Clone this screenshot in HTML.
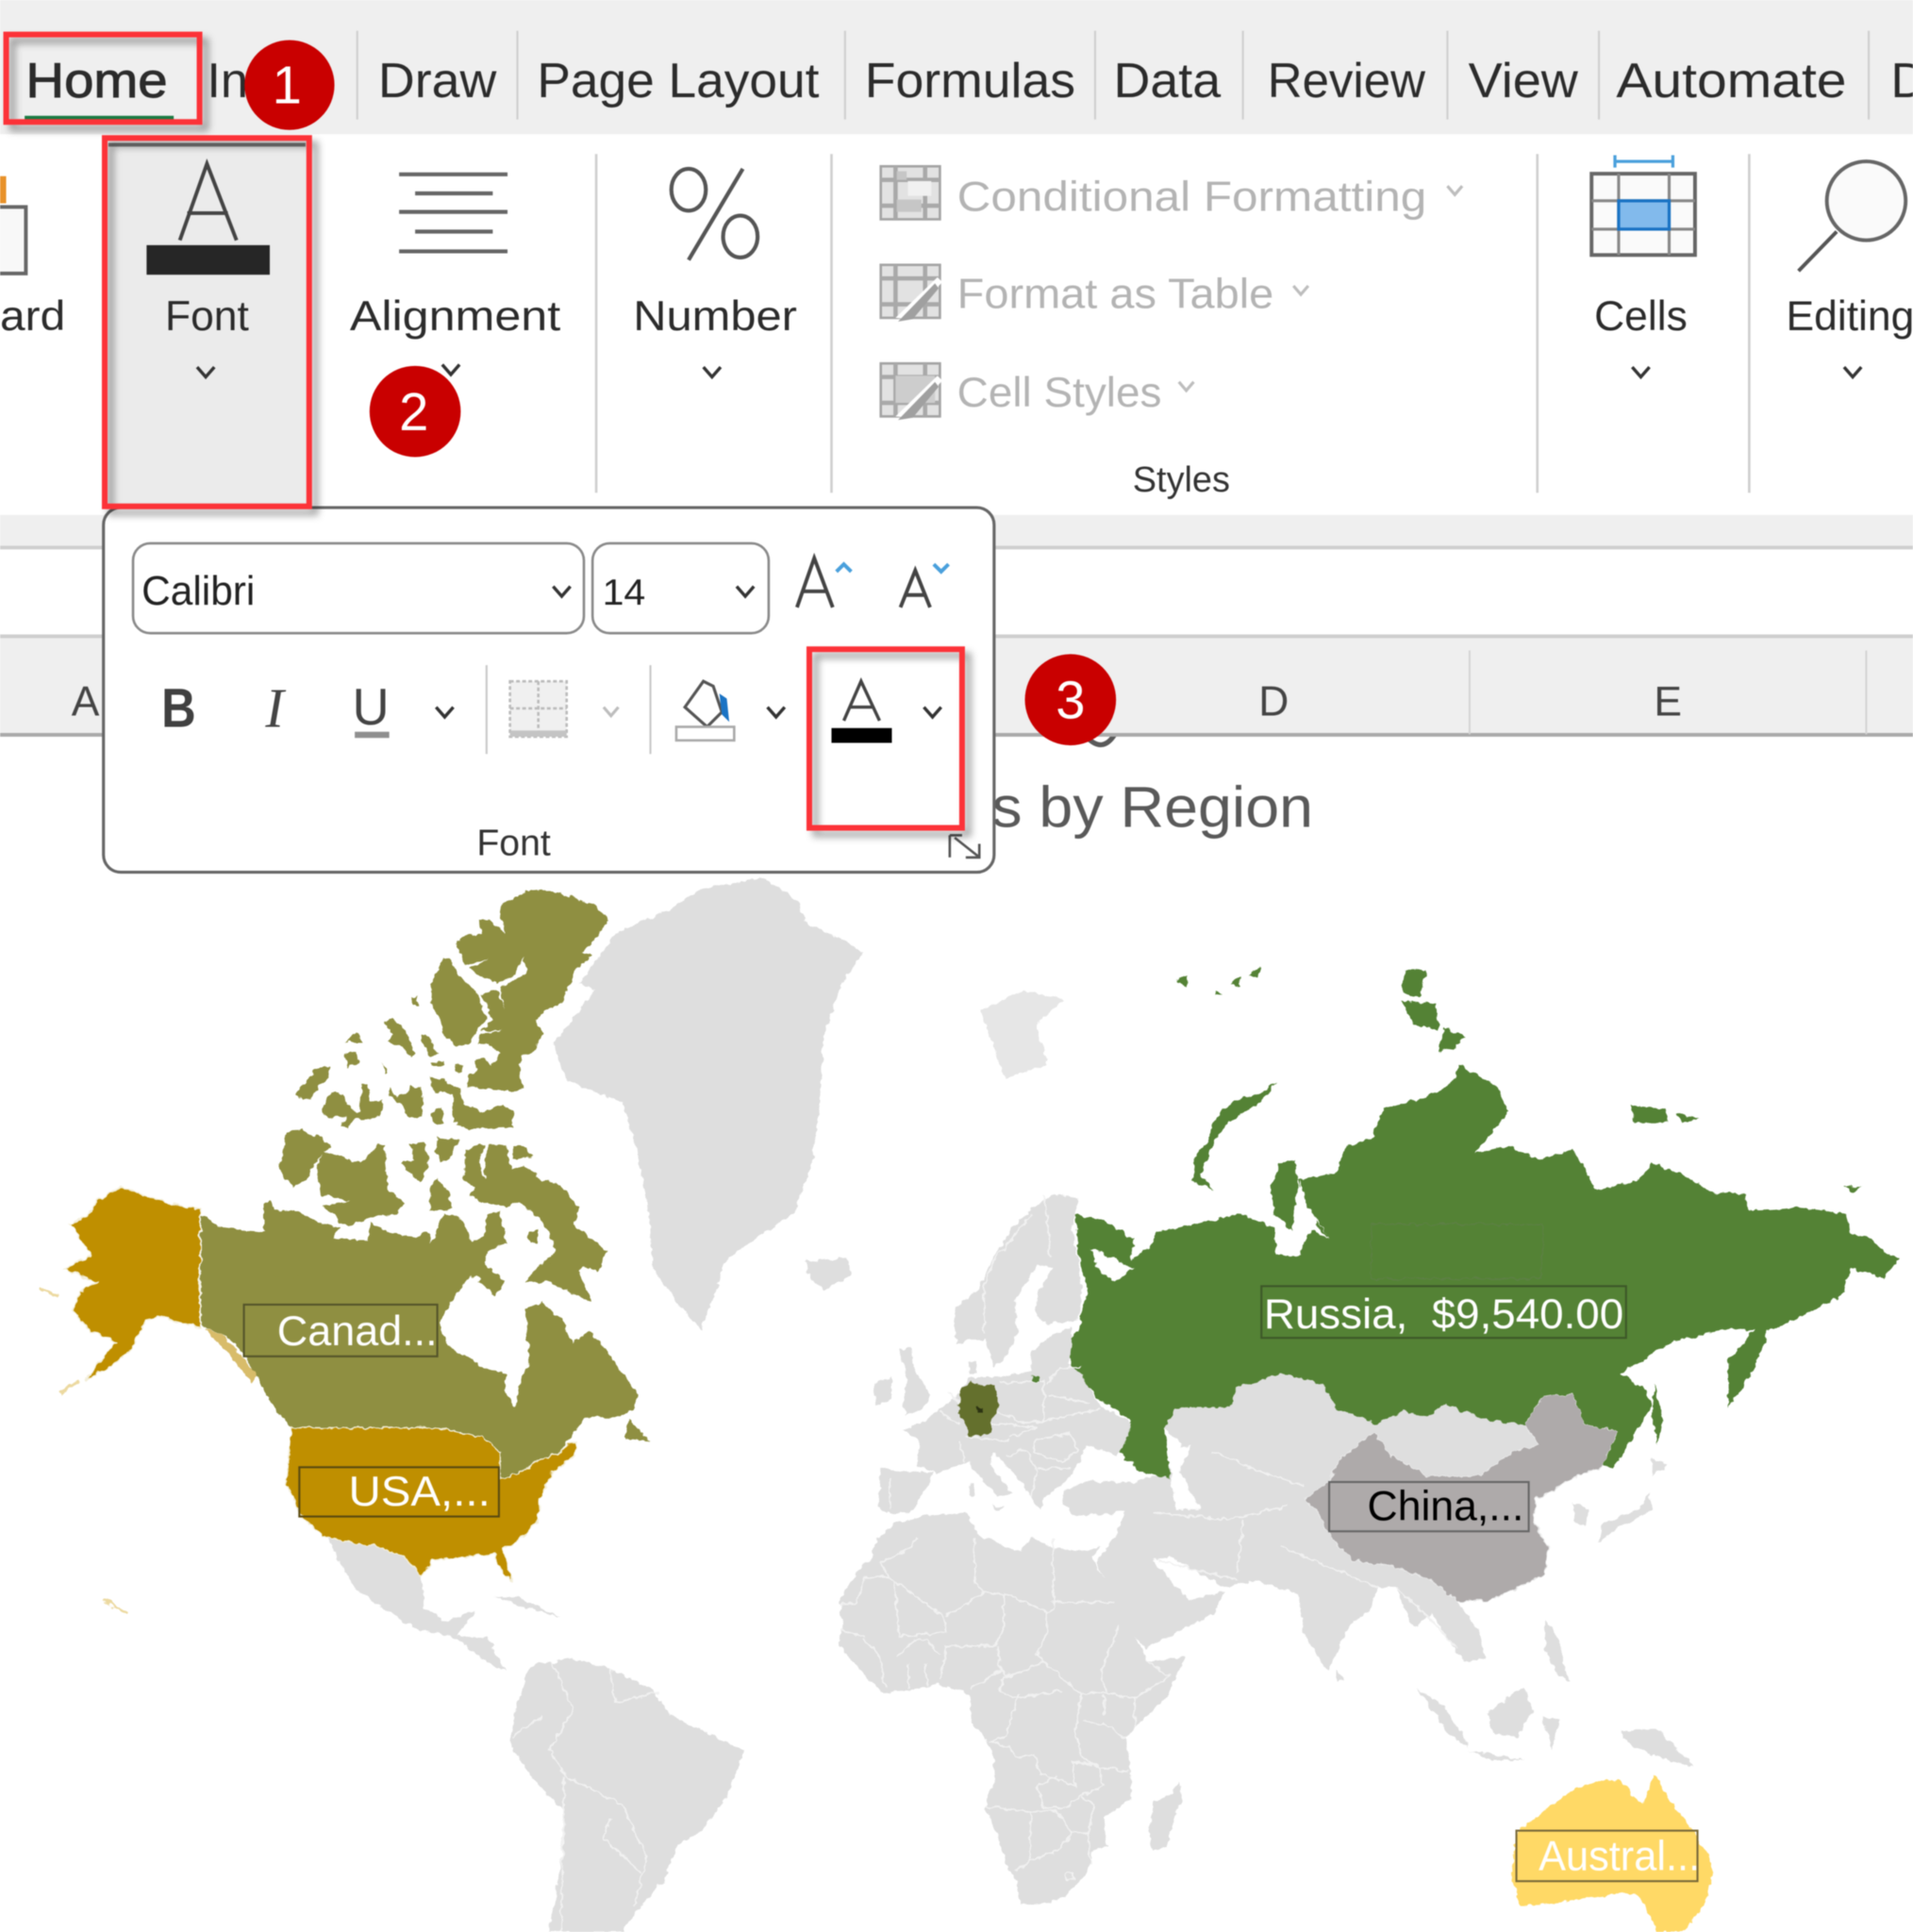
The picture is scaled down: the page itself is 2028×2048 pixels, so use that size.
<!DOCTYPE html>
<html><head><meta charset="utf-8"><style>
html,body{margin:0;padding:0;background:#fff;width:2028px;height:2048px;overflow:hidden}
svg{display:block;filter:blur(.6px)}
text{font-family:"Liberation Sans",sans-serif}
.t{fill:#2b2b2b;font-size:34px}
.d{fill:#b4b4b4;font-size:34px}
.n{stroke:#f1f1f1;stroke-width:1.8;fill:none;vector-effect:non-scaling-stroke}
.s{stroke:#f3eed8;stroke-width:2;vector-effect:non-scaling-stroke}
.lb{font-size:34px}
</style></head><body>
<svg xmlns="http://www.w3.org/2000/svg" width="2028" height="2048" viewBox="0 0 2028 2048">
<defs>
<path id="c" d="M-7 -4L0 4L7 -4" fill="none" stroke="#333" stroke-width="2.6"/>
<path id="cg" d="M-6 -4L0 3L6 -4" fill="none" stroke="#bdbdbd" stroke-width="2.4"/>
<filter id="sh" x="-20%" y="-20%" width="150%" height="150%"><feDropShadow dx="5" dy="5" stdDeviation="3" flood-color="#000" flood-opacity=".38"/></filter>
<filter id="rough" filterUnits="userSpaceOnUse" x="0" y="900" width="2028" height="1148" color-interpolation-filters="sRGB"><feTurbulence type="fractalNoise" baseFrequency=".13" numOctaves="2" seed="4" result="n"/><feDisplacementMap in="SourceGraphic" in2="n" scale="7" xChannelSelector="R" yChannelSelector="G"/></filter>
<g id="gr"><rect width="48" height="43" fill="#e2e2e2" stroke="#a4a4a4" stroke-width="2"/><path d="M0 11H48M0 32H48M12 0V43M36 0V43" stroke="#a9a9a9" stroke-width="3.500"/></g>
<g id="br"><path d="M12 43L46 10L50 14L22 44Z" fill="#fff"/><path d="M14 46L44 15L47 19L26 44Z" fill="#a0a0a0"/></g>
</defs>
<rect width="2028" height="2048" fill="#fff"/>

<g filter="url(#rough)">
<!-- MAP west -->
<g transform="translate(0,920) scale(.6467,.7194)">
<g fill="#dedede">
<path d="M1010 95L1100 60L1150 30L1250 15L1310 50L1320 80L1390 110L1415 125L1380 170L1350 250L1345 340L1330 440L1300 510L1240 545L1190 580L1150 680L1110 640L1070 590L1065 520L1045 420L1020 345L930 315L905 260L950 210L975 180L950 170L1000 110Z"/>
<path d="M1320 580L1390 575L1395 600L1350 622L1325 600Z"/>
<path d="M535 985L620 1000L670 1020L690 1045L695 1090L730 1110L780 1095L750 1130L800 1135L830 1185L790 1165L740 1130L690 1125L625 1090L580 1060Z"/>
<path d="M810 1075L850 1075L920 1105L860 1090Z"/>
<path d="M870 1175L940 1165L1000 1180L1070 1210L1100 1250L1220 1300L1190 1370L1150 1420L1110 1440L1090 1490L1050 1530L1020 1568L900 1568L925 1440L925 1390L870 1340L835 1290L845 1240Z"/>
</g>
<path class="n" d="M905 1170L940 1240L900 1300L930 1340L1020 1380L1060 1460L1040 1530M1000 1180L1010 1230L1080 1215M840 1280L890 1250M925 1340L920 1568M1000 1400L990 1430L1050 1480"/>
<g fill="#8f8f41">
<path d="M330 510L360 530L780 565L790 570L780 590L750 625L720 670L730 700L790 735L830 745L825 770L845 795L855 750L868 730L865 690L860 650L890 640L920 665L940 700L965 680L985 700L1020 745L1045 775L1040 795L1015 810L960 810L925 850L920 860L880 875L845 895L820 900L820 862L790 838L715 825L478 825L445 790L420 750L400 715L370 690L330 675Z"/>
<path d="M990 570L965 590L945 585L970 640L900 610L860 610L880 590L905 570L950 560Z"/>
<path d="M790 580L830 610L810 630L785 610Z"/>
<path d="M1030 810L1065 845L1025 840Z"/>
</g>
<g fill="#bf8f00" class="s">
<path d="M200 470L260 490L328 505V678L290 670L265 660L240 665L215 710L180 735L140 755L190 700L145 680L120 655L130 625L160 610L105 590L150 570L115 525L145 510L160 490Z"/>
<path d="M478 825L715 825L790 838L820 862L820 900L845 895L880 875L920 860L930 850L945 845L945 865L905 890L885 930L880 965L850 990L825 1005L838 1050L825 1040L810 1010L760 1015L710 1020L690 1045L670 1020L620 1000L580 995L530 985L490 950L470 905Z"/>
</g>
<path d="M335 678L365 688L420 745L415 760L370 712Z" fill="#d8bc6a"/>
<path d="M65 620L95 630M100 775L130 755M170 1078L210 1100" stroke="#ecd9a0" stroke-width="4"/>
</g>

<!-- Arctic Canada -->
<g transform="translate(280,930) scale(.3333)" fill="#8f8f41">
<path d="M835 45L910 40L1000 70L1060 90L1095 140L1060 190L1010 240L1040 245L990 300L960 365L945 400L900 420L860 450L885 500L850 560L820 570L810 630L825 670L790 680L710 675L645 665L650 630L680 610L670 580L700 575L725 600L750 560L715 530L680 530L685 500L760 485L690 490L725 450L690 370L745 360L765 415L750 350L810 320L835 295L825 255L800 310L740 340L720 325L690 315L650 290L690 275L710 260L640 280L610 210L640 185L690 180L685 135L710 135L770 175L750 130L755 85Z"/>
<path d="M570 255L590 260L625 320L680 370L710 450L680 480L650 530L610 540L570 500L560 450L530 410L530 340L550 290Z"/>
<path d="M465 380L485 375L490 410L475 410Z"/>
<path d="M380 460L410 450L450 490L480 560L470 570L430 535L390 520L410 500Z"/>
<path d="M500 500L525 505L550 565L530 570L510 540Z"/>
<path d="M255 530L295 495L315 525L270 525Z"/><path d="M255 560L295 555L300 590L265 605Z"/>
<path d="M525 590L575 580L575 600L530 600Z"/><path d="M610 595L635 595L630 620L615 620Z"/><path d="M375 590L395 620L385 625Z"/>
<path d="M100 690L160 615L205 600L205 640L170 670L150 700L120 710Z"/>
<path d="M185 745L210 680L235 680L280 740L305 745L310 655L330 660L335 710L375 710L370 760L290 770L265 800L240 795L265 760L205 765Z"/>
<path d="M400 665L415 695L455 690L465 665L500 670L505 760L465 765L430 720L395 690Z"/>
<path d="M525 635L570 645L620 670L640 730L700 745L760 720L795 745L790 795L650 800L600 780L600 690L540 685Z"/>
<path d="M530 745L565 735L575 785L535 780Z"/>
<path d="M70 810L120 805L185 825L210 860L160 910L140 950L95 985L50 935Z"/>
<path d="M190 875L235 885L260 895L305 910L335 880L360 850L385 850L385 900L395 990L445 1040L415 1075L350 1075L270 1110L240 1095L190 1045L270 1030L180 1010L165 920Z"/>
<path d="M460 845L510 840L525 920L495 970L430 905L480 900Z"/>
<path d="M550 830L620 835L590 895L560 905L545 880Z"/>
<path d="M530 1060L530 980L550 955L585 1000L600 1055L545 1060Z"/>
<path d="M640 870L690 845L705 850L685 880L690 940L715 975L700 985L650 1010L670 990L635 960Z"/>
<path d="M720 850L770 850L785 930L830 915L880 960L945 980L1000 1050L985 1105L1090 1190L1060 1260L1020 1210L1000 1260L900 1260L925 1180L905 1130L870 1080L810 1030L770 1050L690 1030L650 1010L705 960L700 900Z"/>
<path d="M790 855L830 855L850 890L790 895Z"/>
<path d="M840 1125L870 1120L870 1160L845 1165Z"/>
<path d="M0 1040L15 1030L30 1060L100 1060L180 1100L240 1115L220 1145L330 1155L340 1100L395 1130L480 1145L520 1125L535 1165L570 1065L630 1085L660 1160L700 1140L710 1070L750 1060L770 1165L710 1190L690 1270H0Z"/>
</g>

<!-- MAP east -->
<g transform="translate(1014,920) scale(.6467,.7194)">
<path fill="#dedede" d="M340 895L370 850L340 825L360 795L450 795L460 765L530 745L600 760L620 795L690 820L730 800L770 810L800 790L880 815L930 820L960 780L1010 775L1030 820L1085 830L1060 880L1000 905L950 930L940 960L970 1000L965 1040L925 1060L870 1080L820 1080L860 1130L865 1165L830 1170L780 1100L750 1120L720 1060L690 1060L680 1090L640 1120L610 1185L570 1130L560 1070L490 1050L440 1060L400 1040L350 1015L320 1020L380 1080L440 1065L420 1100L310 1150L270 1110L230 1020L260 985L300 900Z"/>
<path fill="#fff" d="M345 860L385 850L365 890L400 945L360 945Z"/>
<path class="n" d="M420 860L500 890L570 910M320 950L450 960L540 940M470 960L460 1040M530 1000L690 1060M330 1020L460 1050M720 1060L780 1110L820 1150"/>
<g fill="#dedede">
<path d="M1135 920L1140 945L1090 970L1050 995L1060 965L1120 945Z"/><path d="M1140 870L1165 880L1140 895Z"/><path d="M1010 935L1035 945L1030 970L1015 965Z"/>
<path d="M965 1110L985 1130L1005 1200L985 1190L965 1150Z"/>
<path d="M755 1210L800 1235L840 1295L810 1280Z"/><path d="M870 1245L930 1205L945 1240L920 1280L880 1275Z"/>
<path d="M840 1300L930 1315L880 1315Z"/><path d="M1090 1270L1150 1270L1210 1325L1150 1310L1100 1290Z"/>
<path d="M622 1180L635 1195L625 1200Z"/><path d="M960 1250L990 1255L975 1300Z"/>
</g>
<path fill="#e6e6e6" d="M40 210L110 180L175 195L130 230L150 290L80 310L60 260Z"/>
<path fill="#aeaaaa" stroke="#e8e8e8" stroke-width="1.500" d="M685 830L710 865L770 895L860 895L910 860L955 850L930 820L960 780L1010 775L1030 820L1085 830L1060 880L1000 905L950 930L945 965L970 1000L965 1040L925 1060L870 1080L820 1080L780 1050L720 1030L650 1020L615 990L590 945L570 930L610 905L630 870Z"/>
<g fill="#548235">
<path d="M195 510L240 520L290 545L285 580L320 555L330 535L395 525L460 510L520 530L525 570L560 570L590 520L610 545L570 490L560 460L620 450L640 410L680 400L700 355L760 340L810 320L825 290L885 320L905 360L850 420L905 410L960 430L1010 415L1050 475L1120 460L1140 435L1200 455L1240 480L1290 480L1300 505L1380 500L1460 510L1465 540L1500 545L1520 565L1545 575L1520 605L1465 590L1455 625L1440 635L1340 680L1255 680L1170 700L1090 745L1130 770L1140 790L1110 840L1075 885L1060 880L1085 830L1030 820L1010 775L960 780L930 820L880 815L800 790L770 810L730 800L690 820L620 795L600 760L530 745L460 765L450 795L360 795L340 825L350 900L300 890L265 860L285 815L230 780L190 740L180 700L200 680L215 620L200 570Z"/>
<path d="M525 315L500 345L445 375L420 410L400 450L420 475L385 460L395 420L410 405L420 375L450 345L500 330Z"/>
<path d="M530 435L555 430L560 470L550 535L520 510L515 470Z"/>
<path d="M1335 645L1290 700L1265 725L1265 795L1300 750L1325 700Z"/>
<path d="M1145 760L1158 815L1150 850L1140 810Z"/>
<path d="M735 150L770 150L760 190L730 185Z"/><path d="M730 195L785 200L790 240L750 230Z"/><path d="M800 235L835 250L815 265L790 270Z"/>
<path d="M1105 350L1165 355L1165 375L1110 375Z"/><path d="M1180 362L1220 370L1190 375Z"/><path d="M1455 470L1485 470L1470 478Z"/>
<path d="M490 150L500 145L495 160L480 160Z"/><path d="M455 165L465 160L465 175L450 172Z"/><path d="M360 165L380 160L375 175Z"/><path d="M425 180L435 185L425 190Z"/>
</g>
<g fill="#fff">
<path d="M220 560L290 590L260 610L230 590Z"/>
<path d="M530 570L550 545L565 460L575 515L610 548L575 530L560 575Z"/>
</g>
<path fill="#ffd966" d="M920 1420L970 1385L1010 1360L1050 1345L1090 1345L1105 1365L1125 1380L1145 1335L1165 1370L1200 1410L1230 1450L1240 1480L1225 1530L1190 1568H1150L1120 1515L1095 1510L1050 1515L980 1525L925 1530L908 1480Z"/>
<rect x="680" y="525" width="280" height="80" fill="none" stroke="#5f7f48" stroke-width="2" opacity=".8"/>
</g>

<!-- Europe -->
<g transform="translate(880,1260) scale(.3333)">
<g fill="#dedede">
<path d="M400 380L470 320L520 220L600 100L700 20L790 30L770 130L790 230L800 340L790 420L690 430L655 400L660 330L700 270L710 250L660 240L590 350L590 420L600 455L560 530L520 570L495 480L440 480L405 495L395 420Z"/>
<path d="M640 520L700 470L770 440L760 560L800 590L830 650L870 700L960 745L950 790L910 850L860 830L810 820L790 880L750 930L680 985L670 1020L650 1000L620 950L570 890L520 840L510 880L580 970L540 980L480 920L440 870L380 890L340 905L280 880L285 800L230 770L300 740L350 700L415 650L440 600L530 600L640 580Z"/>
<path d="M440 550L465 550L470 590L445 590Z"/>
<path d="M220 510L260 510L265 570L320 660L300 700L240 720L230 680L245 600Z"/>
<path d="M140 620L195 600L195 670L145 690Z"/>
<path d="M160 890L330 905L290 980L260 1030L190 1035L155 1015Z"/>
<path d="M740 960L830 930L1010 940L1030 1000L890 1035L780 1040L745 1005Z"/>
<path d="M510 1010L550 1010L540 1025Z"/><path d="M440 940L460 940L460 980L445 980Z"/>
</g>
<path class="n" d="M680 20L690 100L700 220M640 80L520 230L490 310L490 460M540 620L680 610L680 740L620 745L530 710M690 660L820 680M690 620L730 570L800 570M680 740L860 700M510 745L660 760L570 790M650 800L760 780L790 830L740 870L650 840ZM430 790L570 800M410 800L430 870M560 850L620 830L660 900L640 980M660 890L760 890M380 650L420 690M350 710L410 750M190 925L190 1020"/>
<path d="M420 640L450 610L470 625L525 625L540 690L510 740L510 780L440 790L435 750L405 715Z" fill="#64702d"/>
<rect x="470" y="697" width="14" height="14" fill="#2c3312"/>
<rect x="640" y="598" width="25" height="14" fill="#548235"/>
</g>

<!-- Africa -->
<g transform="translate(880,1630) scale(.3333)">
<path fill="#dedede" d="M150 0L210 -50L300 -70L430 -80L470 -10L560 30L610 40L640 0L710 35L800 40L860 30L835 60L910 200L990 350L1010 395L1130 380L1070 510L980 590L940 640L955 740L960 830L870 890L880 980L835 995L835 1020L810 1075L750 1140L690 1160L605 1165L590 1090L560 1040L540 970L495 865L500 830L525 770L520 700L490 630L450 590L445 510L430 490L395 480L340 465L260 485L170 490L130 460L90 410L50 370L25 330L40 290L30 200L90 100L130 70Z"/>
<path fill="#dedede" d="M1110 775L1120 830L1090 900L1070 985L1025 995L1015 940L1030 840L1085 820Z"/>
<path class="n" d="M160 80L240 40L280 0M160 80L190 125L360 250L370 300L220 315L205 140M190 125L110 125L85 210L30 210M110 315L35 295M105 320L160 380L175 480M370 250L490 175L550 180L555 290L520 345L370 345L350 450M490 175L460 140L460 0M550 175L690 235L710 230V0M710 205H900M690 235V300L660 370L680 395L800 500L860 490L900 500L970 510L1080 440L1005 390M680 395L600 430L550 450L540 490L600 510L740 485M530 345L545 420L450 480M545 420L560 440L600 430M920 280L860 430L880 490M600 495L560 630L510 650L570 665L590 700L650 690L670 750L780 790L770 715L850 720L870 790L800 820L750 860L680 860L660 790L720 760M800 500L780 610L800 700L860 730L950 745M800 585L870 590L940 640M870 500L870 570M970 510L970 600M495 855L640 870L635 1030L590 1060M640 870L720 870L770 940L820 940L840 850L800 825M770 940L720 1000L635 1025M820 940L830 1040M210 380L270 325L310 325L350 370M250 400L250 480M300 400L310 470"/>
<circle cx="762" cy="1077" r="14" class="n"/>
</g>
</g>

<!-- UI + labels in overview coords -->
<g transform="scale(1.3059)">
<g fill="none" stroke-width="1.6">
<rect x="1024" y="1044" width="296" height="42" stroke="#3d5828"/>
<rect x="198" y="1059" width="157" height="42" stroke="#55552a"/>
<rect x="243" y="1191" width="162" height="40" stroke="#5a4a10"/>
<rect x="1079" y="1203" width="162" height="40" stroke="#666"/>
<rect x="1231" y="1486" width="147" height="41" stroke="#7a6a3a"/>
</g>
<g class="lb" fill="#fff">
<text x="1026" y="1078" textLength="292" lengthAdjust="spacingAndGlyphs" xml:space="preserve">Russia,  $9,540.00</text>
<text x="225" y="1092" textLength="130" lengthAdjust="spacingAndGlyphs">Canad...</text>
<text x="283" y="1222" textLength="115" lengthAdjust="spacingAndGlyphs">USA,...</text>
<text x="1110" y="1234" textLength="127" lengthAdjust="spacingAndGlyphs" fill="#000">China,...</text>
<text x="1249" y="1518" textLength="131" lengthAdjust="spacingAndGlyphs">Austral...</text>
</g>

<!-- chart title -->
<text x="805" y="671" textLength="261" lengthAdjust="spacingAndGlyphs" font-size="47" fill="#595959">s by Region</text>
<path d="M882 598Q895 612 905 596" fill="none" stroke="#595959" stroke-width="4"/>

<!-- top bands -->
<rect width="1553" height="109" fill="#efefef"/>
<rect y="109" width="1553" height="309" fill="#fff"/>
<rect y="418" width="1553" height="26" fill="#efefef"/>
<rect y="443" width="1553" height="3" fill="#cfcfcf"/>
<rect y="446" width="1553" height="70" fill="#fff"/>
<rect y="515" width="1553" height="82" fill="#efefef"/>
<rect y="515" width="1553" height="3" fill="#cfcfcf"/>
<rect y="595" width="1553" height="3" fill="#aaa"/>
<path d="M1193 528V596M1515 528V596" stroke="#d4d4d4" stroke-width="1.500"/>
<g font-size="34" fill="#444"><text x="1034" y="581" text-anchor="middle">D</text><text x="1354" y="581" text-anchor="middle">E</text><text x="58" y="581">A</text></g>

<!-- tab separators -->
<path d="M290 25V97M420 25V97M686 25V97M889 25V97M1009 25V97M1175 25V97M1298 25V97M1517 25V97" stroke="#cfcfcf" stroke-width="1.600"/>
<g class="t" style="font-size:40px">
<text x="21" y="79" textLength="115" lengthAdjust="spacingAndGlyphs" stroke="#2b2b2b" stroke-width=".7">Home</text>
<text x="168" y="79">In</text>
<text x="307" y="79" textLength="96" lengthAdjust="spacingAndGlyphs">Draw</text>
<text x="436" y="79" textLength="229" lengthAdjust="spacingAndGlyphs">Page Layout</text>
<text x="702" y="79" textLength="171" lengthAdjust="spacingAndGlyphs">Formulas</text>
<text x="904" y="79" textLength="87" lengthAdjust="spacingAndGlyphs">Data</text>
<text x="1029" y="79" textLength="128" lengthAdjust="spacingAndGlyphs">Review</text>
<text x="1192" y="79" textLength="89" lengthAdjust="spacingAndGlyphs">View</text>
<text x="1312" y="79" textLength="187" lengthAdjust="spacingAndGlyphs">Automate</text>
<text x="1535" y="79">D</text>
</g>
<rect x="20" y="94" width="121" height="3" fill="#1a7a43"/>

<!-- ribbon separators -->
<path d="M484 125V400M675 125V400M1248 125V400M1420 125V400" stroke="#cfcfcf" stroke-width="2"/>

<!-- clipboard -->
<rect x="0" y="143" width="5" height="22" fill="#e8922a"/>
<rect x="-6" y="168" width="27" height="54" fill="#f8f8f8" stroke="#666" stroke-width="3"/>
<text class="t" x="0" y="268" textLength="53" lengthAdjust="spacingAndGlyphs">ard</text>

<!-- font button -->
<rect x="86" y="113" width="164" height="296" fill="#ebebeb"/>
<rect x="88" y="116" width="160" height="3" fill="#777"/>
<path d="M146 195L168 133L192 195M152 173H185" fill="none" stroke="#444" stroke-width="3"/>
<rect x="119" y="199" width="100" height="24" fill="#262626"/>
<text class="t" x="168" y="268" text-anchor="middle">Font</text>
<use href="#c" x="167" y="302"/>

<!-- alignment -->
<path d="M324 141.500H412M337 157H400M324 172H412M337 188H400M324 204H412" stroke="#666" stroke-width="3.200"/>
<text class="t" x="284" y="268" textLength="171" lengthAdjust="spacingAndGlyphs">Alignment</text>
<use href="#c" x="366" y="300"/>

<!-- number -->
<g fill="none" stroke="#555" stroke-width="3.200"><ellipse cx="559" cy="154" rx="14" ry="17"/><ellipse cx="601" cy="192" rx="14" ry="17"/><path d="M603 137L559 211"/></g>
<text class="t" x="514" y="268" textLength="133" lengthAdjust="spacingAndGlyphs">Number</text>
<use href="#c" x="578" y="302"/>

<!-- styles -->
<use href="#gr" x="715" y="135"/><rect x="737" y="147" width="19" height="12" fill="#f1f1f1"/><rect x="728" y="139" width="8" height="7" fill="#c6c6c6"/><rect x="728" y="162" width="20" height="10" fill="#c6c6c6"/>
<use href="#gr" x="715" y="215"/><use href="#br" x="715" y="215"/>
<use href="#gr" x="715" y="295"/><rect x="727" y="305" width="32" height="22" fill="#cdcdcd"/><use href="#br" x="715" y="295"/>
<text class="d" x="777" y="171" textLength="381" lengthAdjust="spacingAndGlyphs">Conditional Formatting</text>
<text class="d" x="777" y="250" textLength="257" lengthAdjust="spacingAndGlyphs">Format as Table</text>
<text class="d" x="777" y="330" textLength="166" lengthAdjust="spacingAndGlyphs">Cell Styles</text>
<use href="#cg" x="1181" y="155"/><use href="#cg" x="1056" y="236"/><use href="#cg" x="963" y="314"/>
<text x="959" y="399" text-anchor="middle" font-size="29" fill="#333">Styles</text>

<!-- cells -->
<path d="M1311 131H1358M1311 126V136M1358 126V136" stroke="#4aa0dc" stroke-width="2.500" fill="none"/>
<rect x="1292" y="141" width="84" height="66" fill="#fafafa" stroke="#666" stroke-width="3"/>
<path d="M1314 141V207M1355 141V207M1292 163H1376M1292 186H1376" stroke="#888" stroke-width="2.400"/>
<rect x="1314" y="163" width="41" height="23" fill="#82baec" stroke="#1a73c4" stroke-width="2.500"/>
<text class="t" x="1332" y="268" text-anchor="middle">Cells</text>
<use href="#c" x="1332" y="302"/>

<!-- editing -->
<circle cx="1515" cy="163" r="32" fill="#fafafa" stroke="#666" stroke-width="3"/>
<path d="M1491 188L1460 220" stroke="#555" stroke-width="3"/>
<text class="t" x="1450" y="268">Editing</text>
<use href="#c" x="1504" y="302"/>

<!-- popup -->
<rect x="84" y="412" width="723" height="296" rx="14" fill="#fff" stroke="#666" stroke-width="2.400"/>
<rect x="108" y="441" width="366" height="73" rx="14" fill="#fff" stroke="#8a8a8a" stroke-width="2"/>
<rect x="481" y="441" width="143" height="73" rx="14" fill="#fff" stroke="#8a8a8a" stroke-width="2"/>
<text x="115" y="491" textLength="92" lengthAdjust="spacingAndGlyphs" font-size="33" fill="#222">Calibri</text>
<text x="489" y="491" textLength="35" lengthAdjust="spacingAndGlyphs" font-size="30" fill="#222">14</text>
<use href="#c" x="456" y="480"/><use href="#c" x="605" y="480"/>
<path d="M647 493L661 453L676 493M652 480H671" fill="none" stroke="#444" stroke-width="3"/>
<path d="M679 464L685 458L691 464" fill="none" stroke="#4aa0dc" stroke-width="3"/>
<path d="M731 493L743 463L755 493M735 483H751" fill="none" stroke="#444" stroke-width="3"/>
<path d="M758 458L764 464L770 458" fill="none" stroke="#4aa0dc" stroke-width="3"/>
<text x="145" y="590" text-anchor="middle" font-size="45" font-weight="bold" fill="#404040" textLength="28" lengthAdjust="spacingAndGlyphs">B</text>
<text x="223" y="590" text-anchor="middle" font-size="45" font-style="italic" style="font-family:'Liberation Serif',serif" fill="#444">I</text>
<text x="301" y="588" text-anchor="middle" font-size="42" fill="#444" textLength="30" lengthAdjust="spacingAndGlyphs">U</text>
<rect x="288" y="594" width="28" height="5" fill="#8f8f8f"/>
<use href="#c" x="361" y="578"/>
<path d="M395 540V612M528 540V612" stroke="#c8c8c8" stroke-width="1.600"/>
<rect x="414" y="553" width="46" height="45" fill="#f0f0f0"/><path d="M414 553H460V598H414ZM437 553V598M414 575H460" fill="none" stroke="#bbb" stroke-width="2" stroke-dasharray="3 2"/><rect x="414" y="593" width="46" height="5" fill="#c4c4c4"/>
<use href="#cg" x="496" y="578"/>
<path d="M571 553L579 557L586 578L574 590L556 574Z" fill="#fff" stroke="#555" stroke-width="2.400"/>
<path d="M584 563L590 567L592 586L586 580Z" fill="#1a73c4"/>
<rect x="549" y="590" width="47" height="11" fill="#fff" stroke="#aaa" stroke-width="2"/>
<use href="#c" x="630" y="578"/>
<path d="M685 585L699 553L714 585M690 574H709" fill="none" stroke="#444" stroke-width="2.600"/>
<rect x="675" y="591" width="49" height="12" fill="#000"/>
<use href="#c" x="757" y="578"/>
<text x="417" y="694" text-anchor="middle" font-size="30" fill="#333">Font</text>
<path d="M771 678V696M771 678H781M775 680L794 695M784 696H795V685" fill="none" stroke="#555" stroke-width="2"/>

<!-- red boxes -->
<g fill="none" stroke="#fc3339" stroke-width="4.600" filter="url(#sh)">
<rect x="5" y="28" width="157" height="71"/>
<rect x="85" y="112" width="166" height="299"/>
<rect x="657" y="527" width="124" height="145"/>
</g>

<!-- badges -->
<g fill="#c90000"><circle cx="235" cy="69" r="36.500"/><circle cx="337" cy="334" r="37"/><circle cx="869" cy="568" r="37"/></g>
<g fill="#fff" font-size="43" text-anchor="middle"><text x="233" y="84">1</text><text x="336" y="349">2</text><text x="869" y="583">3</text></g>
</g>
</svg>
</body></html>
